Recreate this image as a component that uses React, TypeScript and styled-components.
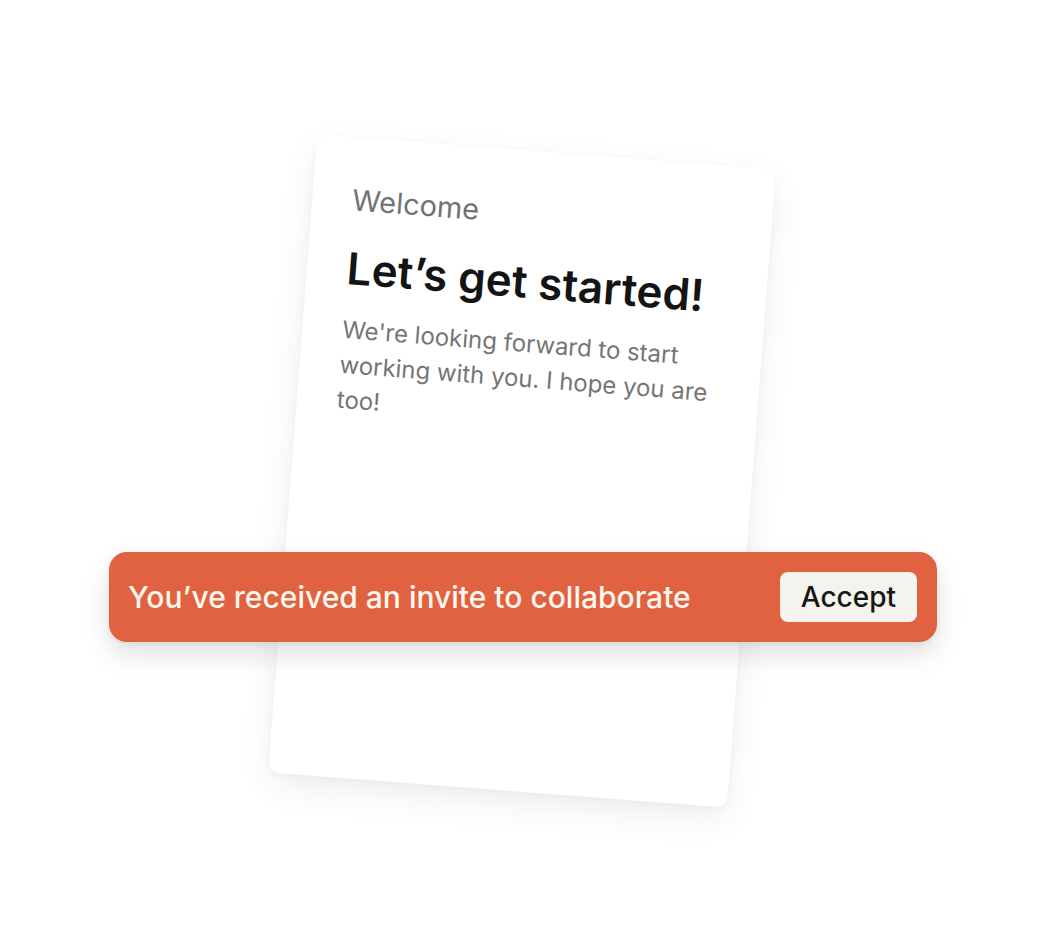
import React from 'react';
import styled, { createGlobalStyle } from 'styled-components';

const GlobalStyle = createGlobalStyle`
  html, body {
    margin: 0;
    padding: 0;
    background: #ffffff;
  }
  body {
    font-family: Inter, "Noto Sans", "Liberation Sans", sans-serif;
    -webkit-font-smoothing: antialiased;
  }
`;

const Stage = styled.div`
  width: 1044px;
  height: 942px;
  display: grid;
  grid-template-areas: 'stack';
  overflow: hidden;
`;

const Card = styled.div`
  grid-area: stack;
  place-self: center;
  box-sizing: border-box;
  width: 460px;
  height: 640px;
  padding: 45px 38px 40px 40px;
  background: #ffffff;
  border-radius: 12px;
  box-shadow: 0 12px 34px rgba(0, 0, 0, 0.07), 0 2px 6px rgba(0, 0, 0, 0.03);
  transform: rotate(4.4deg);
  display: flex;
  flex-direction: column;
`;

const Eyebrow = styled.div`
  font-size: 29px;
  line-height: 36px;
  color: #727272;
`;

const Heading = styled.h1`
  margin: 24px 0 0;
  font-size: 44px;
  line-height: 52px;
  font-weight: 600;
  color: #141414;
`;

const Body = styled.p`
  margin: 18px 0 0;
  font-size: 24px;
  line-height: 35px;
  color: #757575;
`;

const Banner = styled.div`
  grid-area: stack;
  align-self: start;
  justify-self: center;
  position: relative;
  z-index: 1;
  margin-top: 552px;
  margin-left: 2px;
  box-sizing: border-box;
  width: 828px;
  height: 90px;
  padding: 20px 20px 20px 19px;
  background: #e06240;
  border-radius: 18px;
  box-shadow: 0 12px 28px rgba(0, 0, 0, 0.12), 0 2px 6px rgba(0, 0, 0, 0.06);
  display: flex;
  align-items: center;
  justify-content: space-between;
`;

const BannerText = styled.span`
  font-size: 30px;
  font-weight: 500;
  color: #fff7ef;
`;

const AcceptButton = styled.button`
  height: 50px;
  padding: 0 21px;
  border: none;
  border-radius: 8px;
  background: #f4f3ee;
  font-family: inherit;
  font-size: 28px;
  font-weight: 500;
  color: #161616;
  cursor: pointer;
`;

export default function App() {
  return (
    <>
      <GlobalStyle />
      <Stage>
        <Card>
          <Eyebrow>Welcome</Eyebrow>
          <Heading>Let’s get started!</Heading>
          <Body>We're looking forward to start working with you. I hope you are too!</Body>
        </Card>
        <Banner>
          <BannerText>You’ve received an invite to collaborate</BannerText>
          <AcceptButton>Accept</AcceptButton>
        </Banner>
      </Stage>
    </>
  );
}
